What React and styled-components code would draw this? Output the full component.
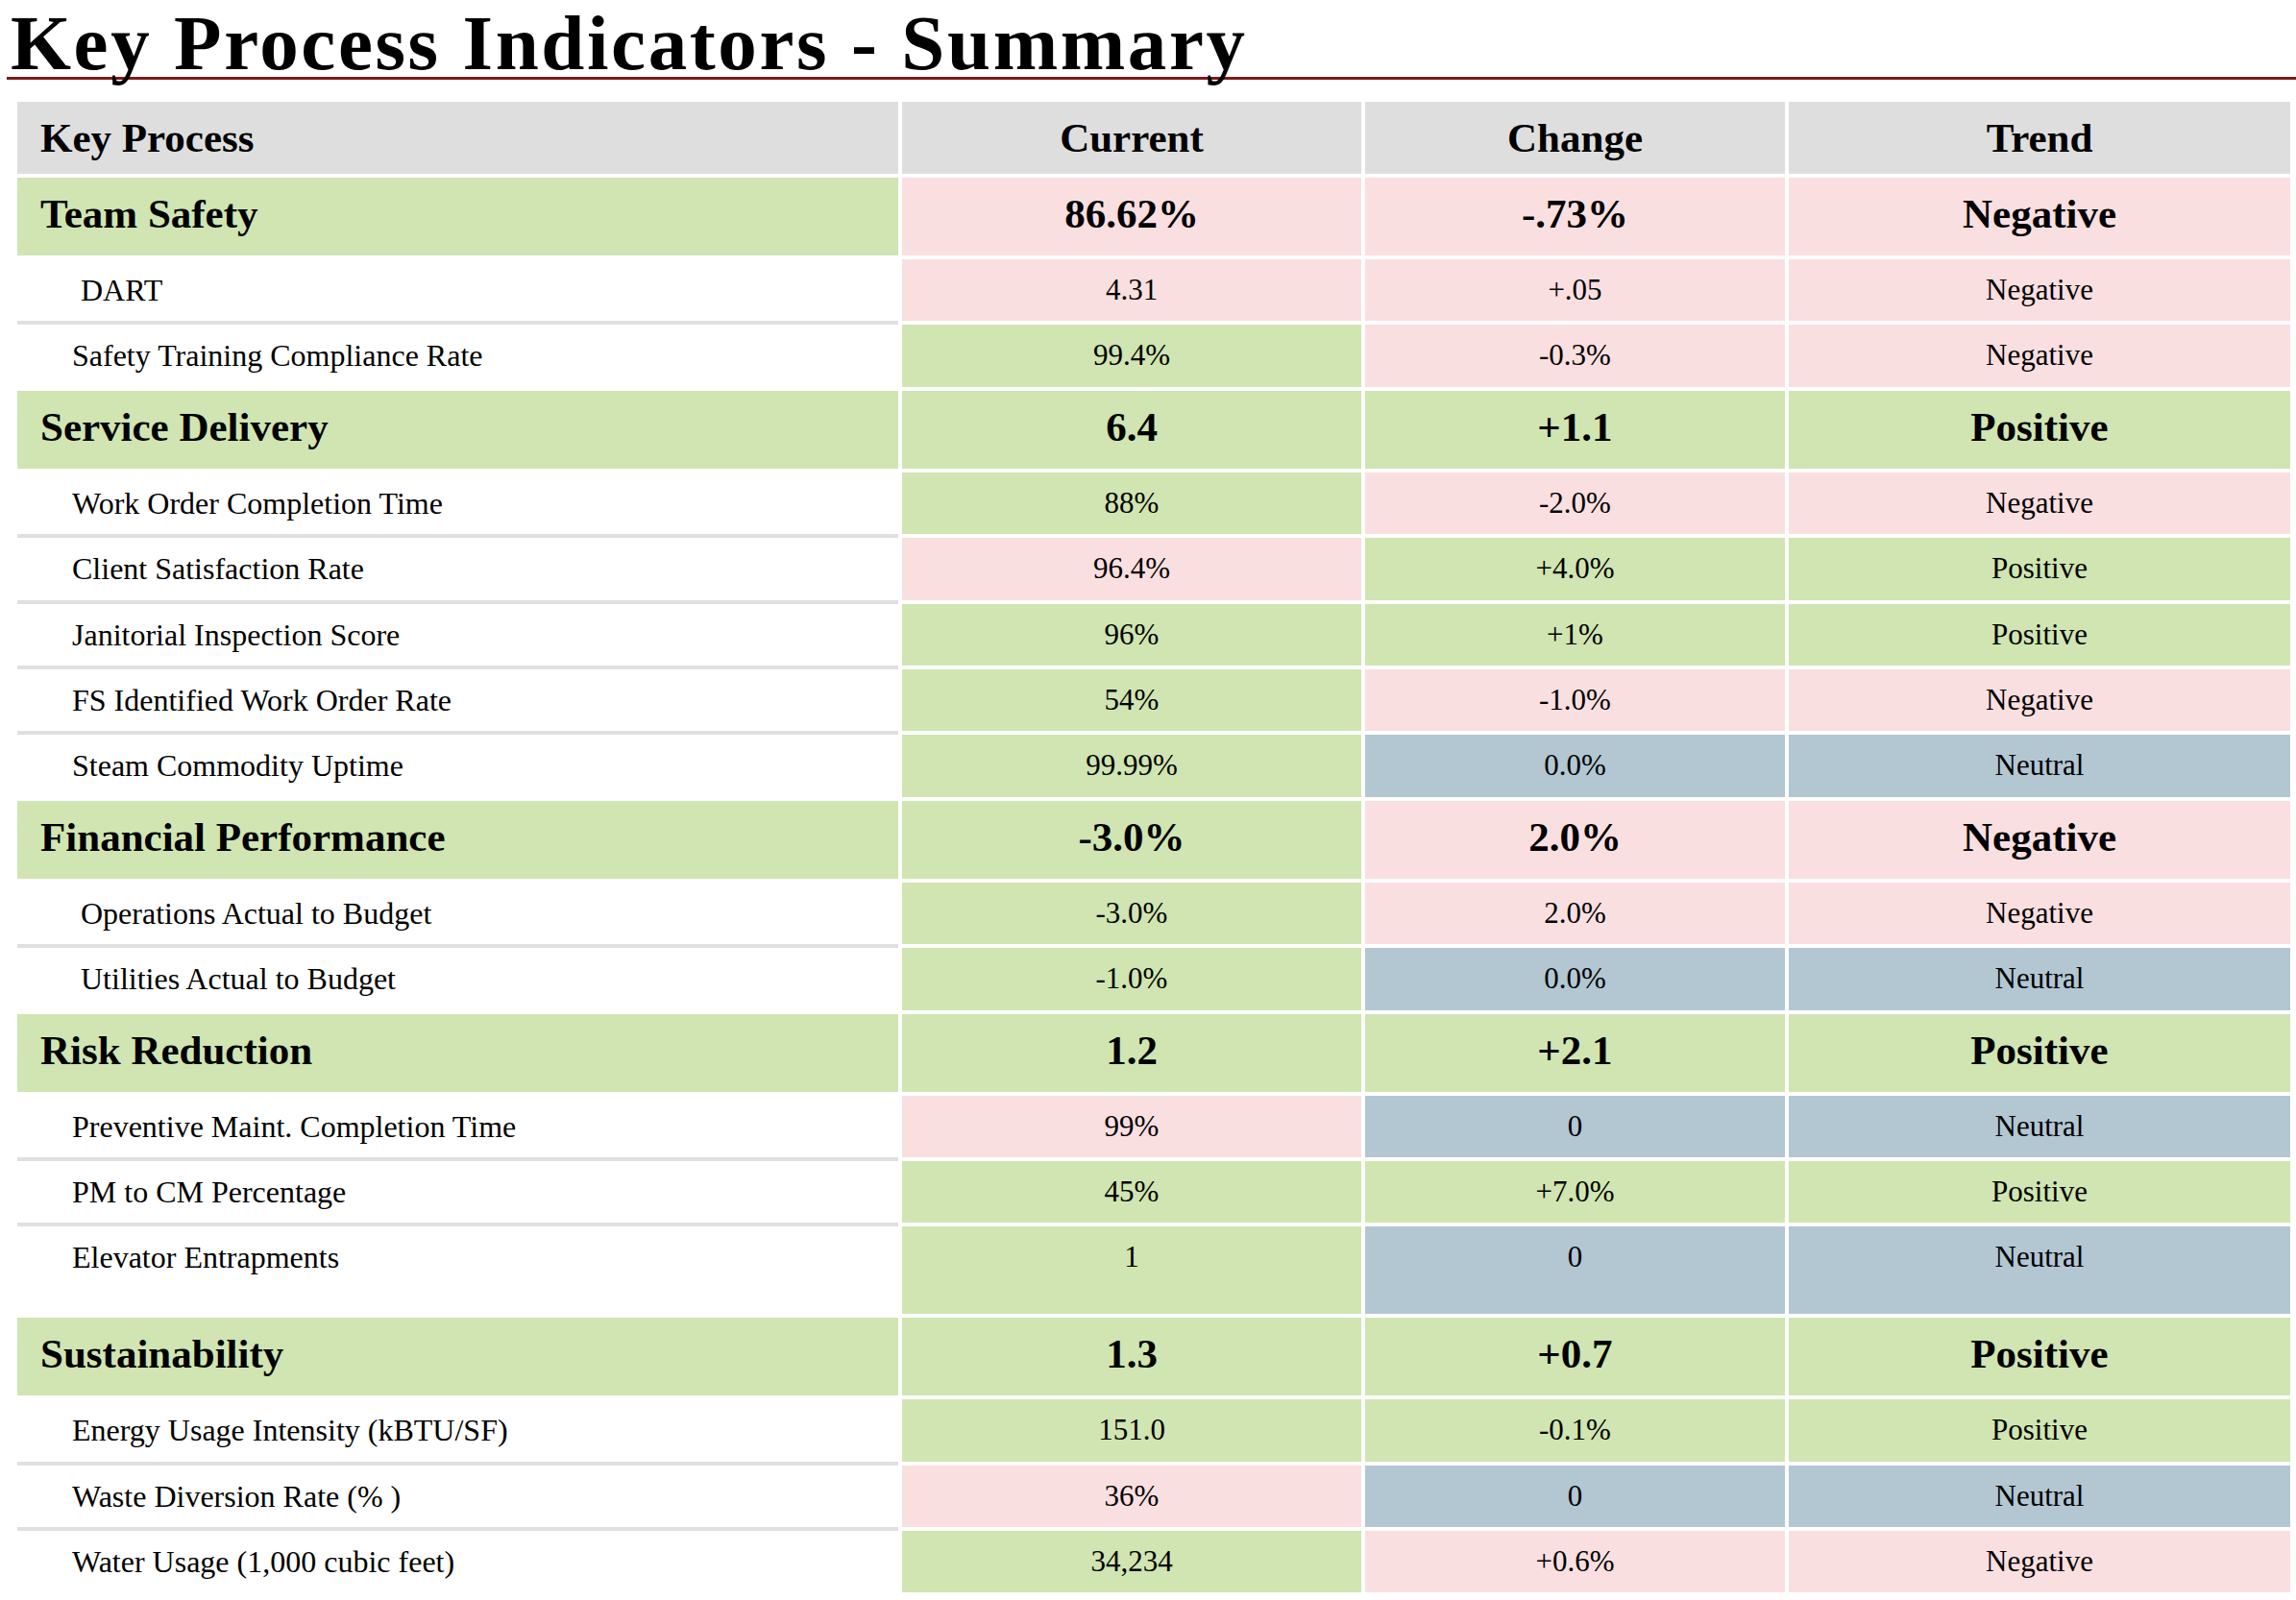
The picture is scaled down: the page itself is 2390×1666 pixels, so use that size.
import React from "react";
import styled, { createGlobalStyle, css } from "styled-components";

const GlobalStyle = createGlobalStyle`
  html, body {
    margin: 0;
    padding: 0;
    background: #ffffff;
  }
  body {
    font-family: "Liberation Serif", "Times New Roman", serif;
    color: #000000;
  }
`;

const tones = {
  green: "#d0e5b1",
  pink: "#fadfe0",
  blue: "#b2c7d2",
  white: "#ffffff",
  gray: "#dedede",
};

const Page = styled.main`
  width: 2390px;
  min-height: 1666px;
  display: flex;
  flex-direction: column;
`;

const TitleBar = styled.header`
  margin-left: 7px;
  padding: 0 0 0 4px;
  height: 80px;
  border-bottom: 3px solid #7b1d18;
`;

const Title = styled.h1`
  margin: 0;
  font-family: "Liberation Serif", "Times New Roman", serif;
  font-weight: 700;
  font-size: 81px;
  letter-spacing: 2.6px;
  line-height: 90px;
  height: 80px;
  white-space: nowrap;
`;

const Table = styled.table`
  margin: 19px 0 0 14px;
  border-collapse: separate;
  border-spacing: 4px;
  table-layout: fixed;
  width: 2374px;
`;

const HeadCell = styled.th`
  background: ${tones.gray};
  font-weight: 700;
  font-size: 43px;
  line-height: 75px;
  padding: 0;
  text-align: ${(p) => (p.$align === "left" ? "left" : "center")};
  padding-left: ${(p) => (p.$align === "left" ? "24px" : "0")};
  white-space: nowrap;
`;

const GroupLabel = styled.td`
  background: ${tones.green};
  font-weight: 700;
  font-size: 43px;
  line-height: 75px;
  padding: 0 0 6px 24px;
  white-space: nowrap;
`;

const GroupValue = styled.td`
  background: ${(p) => tones[p.$tone]};
  font-weight: 700;
  font-size: 43px;
  line-height: 75px;
  padding: 0 0 6px 0;
  text-align: center;
  white-space: nowrap;
`;

const ItemLabel = styled.td`
  background: ${tones.white};
  font-size: 32px;
  line-height: 64.4px;
  padding: 0 0 ${(p) => (p.$tall ? "26.3px" : "0")} ${(p) => (p.$deep ? "66px" : "57px")};
  vertical-align: top;
  white-space: nowrap;
  ${(p) =>
    p.$rule &&
    css`
      box-shadow: 0 4px 0 #e0e0e0;
    `}
`;

const ItemValue = styled.td`
  background: ${(p) => tones[p.$tone]};
  font-size: 31px;
  line-height: 64.4px;
  padding: 0 0 ${(p) => (p.$tall ? "26.3px" : "0")} 0;
  text-align: center;
  vertical-align: top;
  white-space: nowrap;
`;

const g = "green";
const p = "pink";
const b = "blue";

const groups = [
  {
    name: "Team Safety",
    values: ["86.62%", "-.73%", "Negative"],
    tones: [p, p, p],
    items: [
      { label: "DART", deep: true, values: ["4.31", "+.05", "Negative"], tones: [p, p, p] },
      { label: "Safety Training Compliance Rate", values: ["99.4%", "-0.3%", "Negative"], tones: [g, p, p] },
    ],
  },
  {
    name: "Service Delivery",
    values: ["6.4", "+1.1", "Positive"],
    tones: [g, g, g],
    items: [
      { label: "Work Order Completion Time", values: ["88%", "-2.0%", "Negative"], tones: [g, p, p] },
      { label: "Client Satisfaction Rate", values: ["96.4%", "+4.0%", "Positive"], tones: [p, g, g] },
      { label: "Janitorial Inspection Score", values: ["96%", "+1%", "Positive"], tones: [g, g, g] },
      { label: "FS Identified Work Order Rate", values: ["54%", "-1.0%", "Negative"], tones: [g, p, p] },
      { label: "Steam Commodity Uptime", values: ["99.99%", "0.0%", "Neutral"], tones: [g, b, b] },
    ],
  },
  {
    name: "Financial Performance",
    values: ["-3.0%", "2.0%", "Negative"],
    tones: [g, p, p],
    items: [
      { label: "Operations Actual to Budget", deep: true, values: ["-3.0%", "2.0%", "Negative"], tones: [g, p, p] },
      { label: "Utilities Actual to Budget", deep: true, values: ["-1.0%", "0.0%", "Neutral"], tones: [g, b, b] },
    ],
  },
  {
    name: "Risk Reduction",
    values: ["1.2", "+2.1", "Positive"],
    tones: [g, g, g],
    items: [
      { label: "Preventive Maint. Completion Time", values: ["99%", "0", "Neutral"], tones: [p, b, b] },
      { label: "PM to CM Percentage", values: ["45%", "+7.0%", "Positive"], tones: [g, g, g] },
      { label: "Elevator Entrapments", tall: true, values: ["1", "0", "Neutral"], tones: [g, b, b] },
    ],
  },
  {
    name: "Sustainability",
    values: ["1.3", "+0.7", "Positive"],
    tones: [g, g, g],
    items: [
      { label: "Energy Usage Intensity (kBTU/SF)", values: ["151.0", "-0.1%", "Positive"], tones: [g, g, g] },
      { label: "Waste Diversion Rate (% )", values: ["36%", "0", "Neutral"], tones: [p, b, b] },
      { label: "Water Usage (1,000 cubic feet)", values: ["34,234", "+0.6%", "Negative"], tones: [g, p, p] },
    ],
  },
];

export default function App() {
  return (
    <>
      <GlobalStyle />
      <Page>
        <TitleBar>
          <Title>Key Process Indicators - Summary</Title>
        </TitleBar>
        <Table>
          <colgroup>
            <col style={{ width: "917px" }} />
            <col style={{ width: "478px" }} />
            <col style={{ width: "437px" }} />
            <col style={{ width: "522px" }} />
          </colgroup>
          <thead>
            <tr>
              <HeadCell $align="left">Key Process</HeadCell>
              <HeadCell>Current</HeadCell>
              <HeadCell>Change</HeadCell>
              <HeadCell>Trend</HeadCell>
            </tr>
          </thead>
          <tbody>
            {groups.map((grp) => (
              <React.Fragment key={grp.name}>
                <tr>
                  <GroupLabel>{grp.name}</GroupLabel>
                  {grp.values.map((v, i) => (
                    <GroupValue key={i} $tone={grp.tones[i]}>
                      {v}
                    </GroupValue>
                  ))}
                </tr>
                {grp.items.map((it, idx) => (
                  <tr key={it.label}>
                    <ItemLabel
                      $deep={it.deep}
                      $tall={it.tall}
                      $rule={idx < grp.items.length - 1}
                    >
                      {it.label}
                    </ItemLabel>
                    {it.values.map((v, i) => (
                      <ItemValue key={i} $tone={it.tones[i]} $tall={it.tall}>
                        {v}
                      </ItemValue>
                    ))}
                  </tr>
                ))}
              </React.Fragment>
            ))}
          </tbody>
        </Table>
      </Page>
    </>
  );
}
